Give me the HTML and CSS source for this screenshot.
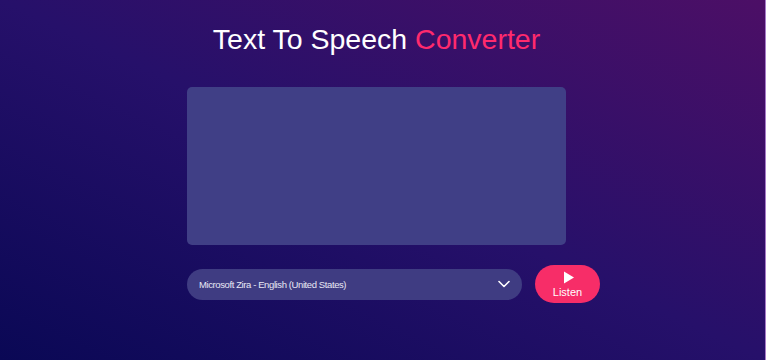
FILE: index.html
```html
<!DOCTYPE html>
<html>
<head>
<meta charset="utf-8">
<link rel="stylesheet" href="styles.css">
</head>
<body>
<div class="page">
  <h1 class="title">Text To Speech <span class="accent">Converter</span></h1>
  <div class="column">
    <textarea class="text-input"></textarea>
    <div class="controls">
      <div class="voice-select">
        <span class="voice-name">Microsoft Zira - English (United States)</span>
        <svg class="chevron" width="12" height="8" viewBox="0 0 12 8"><path d="M1 1.5 L6 6.5 L11 1.5" fill="none" stroke="#ffffff" stroke-width="1.6" stroke-linecap="round" stroke-linejoin="round"/></svg>
      </div>
      <button class="listen-btn">
        <svg class="play" width="12" height="13" viewBox="0 0 12 13"><path d="M1 0.5 L11 6.5 L1 12.5 Z" fill="#ffffff"/></svg>
        <span class="listen-label">Listen</span>
      </button>
    </div>
  </div>
</div>
<div class="edge"></div>
</body>
</html>
```
FILE: styles.css
```css
html, body {
  margin: 0;
  height: 100%;
}
body {
  background: linear-gradient(to top right, #0a0855 0%, #26106a 50%, #4c0f66 100%);
  font-family: "Liberation Sans", Arial, sans-serif;
  overflow: hidden;
}
.page {
  width: 753px;
  padding-top: 22px;
  display: flex;
  flex-direction: column;
  align-items: center;
}
.title {
  margin: 0;
  font-size: 28.5px;
  font-weight: 400;
  line-height: 34px;
  color: #ffffff;
}
.accent {
  color: #ff2a6d;
}
.column {
  width: 379px;
  margin-top: 31px;
  display: flex;
  flex-direction: column;
}
.text-input {
  width: 379px;
  height: 158px;
  box-sizing: border-box;
  border: none;
  border-radius: 5px;
  background: #403f86;
  resize: none;
  outline: none;
  margin: 0;
  display: block;
}
.controls {
  margin-top: 20px;
  display: flex;
  align-items: center;
  gap: 13px;
  width: 413px;
}
.voice-select {
  width: 335px;
  height: 31px;
  box-sizing: border-box;
  border-radius: 16px;
  background: #3f3c82;
  display: flex;
  align-items: center;
  justify-content: space-between;
  padding: 0 12px 0 12px;
}
.voice-name {
  color: #e8e8f4;
  font-size: 9.5px;
  letter-spacing: -0.4px;
}
.chevron {
  display: block;
}
.listen-btn {
  width: 65px;
  height: 38px;
  border: none;
  border-radius: 19px;
  background: #f72d68;
  display: flex;
  flex-direction: column;
  align-items: center;
  justify-content: center;
  gap: 2px;
  padding: 0;
  color: #ffffff;
  font-family: "Liberation Sans", Arial, sans-serif;
}
.play {
  display: block;
  margin-left: 2px;
}
.listen-label {
  font-size: 11px;
  line-height: 12px;
}
.edge {
  position: fixed;
  top: 0;
  right: 0;
  width: 1px;
  height: 100%;
  background: #a77bc9;
}
```
